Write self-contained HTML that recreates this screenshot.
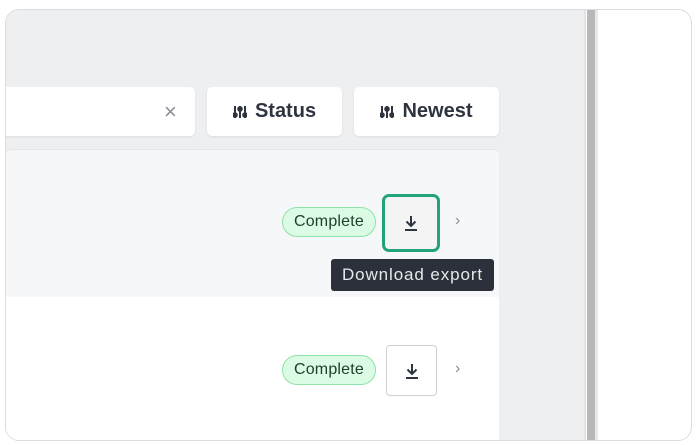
<!DOCTYPE html>
<html><head><style>
body{margin:0;width:699px;height:445px;background:#fff;position:relative;overflow:hidden;font-family:"Liberation Sans",sans-serif}
.card{position:absolute;left:5px;top:9px;width:685px;height:430px;border:1px solid #dcdde0;border-radius:14px;overflow:hidden;background:#fff}
.gray{position:absolute;left:0;top:0;width:578px;height:100%;background:#eeeff1}
.l1{position:absolute;left:578px;top:0;width:2px;height:100%;background:#e2e3e5}
.bar{position:absolute;left:581px;top:0;width:8px;height:100%;background:#b8b8b8}
.l2{position:absolute;left:589px;top:0;width:3px;height:100%;background:#e8e9eb}
.box{position:absolute;background:#fff;border-radius:5px;box-shadow:0 1px 2px rgba(0,0,0,.08)}
.btn{font-weight:bold;font-size:20px;color:#2e3440;display:flex;align-items:center;justify-content:center;gap:8px}
.row{position:absolute;left:0;width:493px}
.badge{position:absolute;left:276px;width:92px;height:28px;border:1px solid #8ee3a8;background:#dcfbe5;border-radius:15px;color:#1f4030;font-size:16px;text-align:center;line-height:28px;letter-spacing:.2px}
.dl{position:absolute;background:#fff;border:1px solid #cfd1d4;border-radius:4px;display:flex;align-items:center;justify-content:center}
.chev{position:absolute;left:449px;color:#8a8f97;font-size:16px}
</style></head><body>
<div class="card">
<div class="gray"></div><div class="l1"></div><div class="bar"></div><div class="l2"></div>
<div class="box" style="left:-6px;top:77px;width:195px;height:49px"><span style="position:absolute;left:164px;top:12px;color:#8a8f97;font-size:22px">×</span></div>
<div class="box btn" style="left:201px;top:77px;width:135px;height:49px"><svg width="14" height="14" viewBox="0 0 14 14" stroke="#2e3440" stroke-width="2" fill="#2e3440"><path d="M2 1v12M7 1v12M12 1v12" fill="none"/><circle cx="2" cy="10" r="1.8"/><circle cx="7" cy="4" r="1.8"/><circle cx="12" cy="10" r="1.8"/></svg>Status</div>
<div class="box btn" style="left:348px;top:77px;width:145px;height:49px"><svg width="14" height="14" viewBox="0 0 14 14" stroke="#2e3440" stroke-width="2" fill="#2e3440"><path d="M2 1v12M7 1v12M12 1v12" fill="none"/><circle cx="2" cy="10" r="1.8"/><circle cx="7" cy="4" r="1.8"/><circle cx="12" cy="10" r="1.8"/></svg>Newest</div>
<div class="row" style="top:139px;height:147px;background:#f6f7f8;border-top:1px solid #e4e5e7;border-radius:5px 5px 0 0;border-bottom:1px solid #e2e3e5"></div>
<div class="row" style="top:287px;height:143px;background:#fff"></div>
<div class="badge" style="top:197px">Complete</div>
<div class="dl" style="left:376px;top:184px;width:52px;height:52px;border:3px solid #22a37e;border-radius:7px;background:#f4f4f4"><svg width="18" height="18" viewBox="0 0 18 18" stroke="#2e3440" stroke-width="2" fill="none"><path d="M9 2v10M4.5 7.5L9 12l4.5-4.5M3 16h12"/></svg></div>
<span class="chev" style="top:202px">›</span>
<div style="position:absolute;left:325px;top:249px;width:163px;height:32px;background:#2b303a;border-radius:3px;color:#e6e8eb;font-size:17px;letter-spacing:.9px;line-height:32px;text-align:center">Download export</div>
<div class="badge" style="top:345px">Complete</div>
<div class="dl" style="left:380px;top:335px;width:49px;height:49px"><svg width="18" height="18" viewBox="0 0 18 18" stroke="#2e3440" stroke-width="2" fill="none"><path d="M9 2v10M4.5 7.5L9 12l4.5-4.5M3 16h12"/></svg></div>
<span class="chev" style="top:350px">›</span>
</div>
</body></html>
